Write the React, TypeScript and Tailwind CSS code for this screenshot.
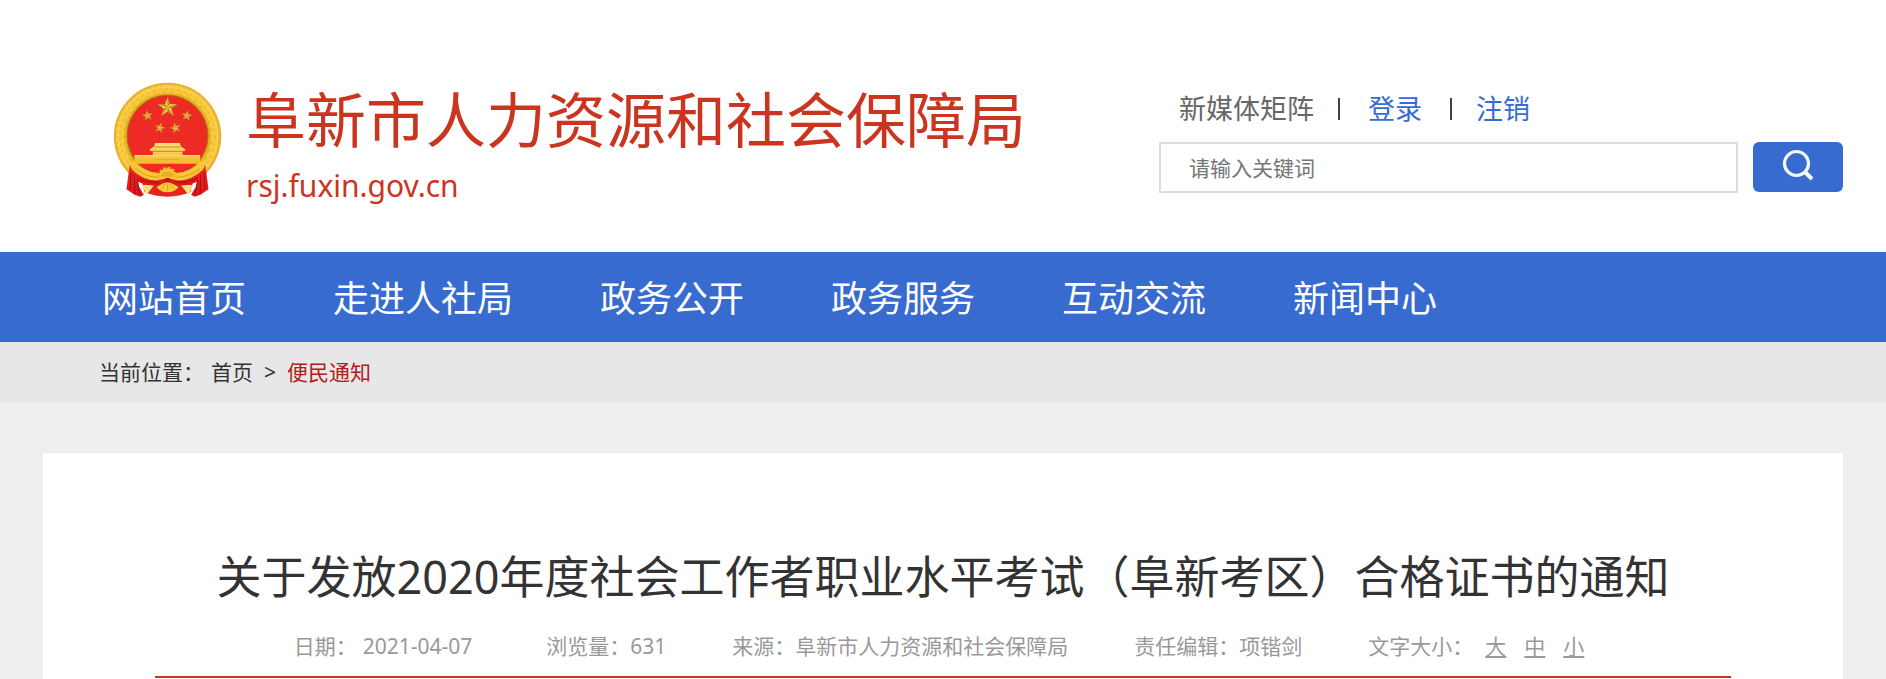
import type { ReactNode } from 'react';

const NAV_ITEMS = ['网站首页', '走进人社局', '政务公开', '政务服务', '互动交流', '新闻中心'];

const FONT_SIZES = ['大', '中', '小'];

// Small stars of the emblem: centre x, centre y, rotation
const SMALL_STARS = [
  [171, 137, -10],
  [289, 137, 10],
  [208, 174, 15],
  [255, 174, -15],
];

export default function App() {
  return (
    <div className="flex min-h-screen flex-col bg-[#eeeeee] font-['Noto_Sans','Noto_Sans_CJK_SC',sans-serif] text-[#333333]">
      <Header />
      <MainNav />
      <Breadcrumb />
      <Article />
    </div>
  );
}

function Header() {
  return (
    <header className="bg-white">
      <div className="mx-auto flex max-w-[1800px] items-start justify-between pt-20 pb-10 pl-[70px]">
        <a href="#" className="flex items-start text-[#cb341f]">
          <Emblem />
          <span className="ml-6 flex flex-col">
            <span className="text-[60px] leading-[80px] whitespace-nowrap">阜新市人力资源和社会保障局</span>
            <span className="text-[30px] leading-[52px]">rsj.fuxin.gov.cn</span>
          </span>
        </a>

        <div className="w-[684px] pt-2">
          <div className="flex h-10 items-center pt-0.5 pl-5 text-[27px] leading-10 text-[#666666]">
            <a href="#">新媒体矩阵</a>
            <Divider />
            <a href="#" className="px-1 text-[#376bd0]">登录</a>
            <Divider />
            <a href="#" className="text-[#376bd0]">注销</a>
          </div>
          <form className="mt-3.5 flex gap-[15px]" onSubmit={(e) => e.preventDefault()}>
            <input
              type="text"
              aria-label="关键词"
              placeholder="请输入关键词"
              className="h-[51px] min-w-0 flex-1 border-2 border-[#dddddd] bg-white px-7 text-[21px] outline-none placeholder:text-[#757575]"
            />
            <button
              type="submit"
              aria-label="搜索"
              className="flex h-[50px] w-[90px] items-center justify-center rounded-md bg-[#376bd0]"
            >
              <svg viewBox="0 0 32 32" className="mb-1 h-8 w-8" fill="none" stroke="#f4f8ff">
                <circle cx="14.5" cy="14.5" r="12" strokeWidth="3.2" />
                <path d="M23 23 L30 30" strokeWidth="4" />
              </svg>
            </button>
          </form>
        </div>
      </div>
    </header>
  );
}

function Divider() {
  return <span className="mx-6 h-[22px] w-0.5 bg-[#444444]" />;
}

function MainNav() {
  return (
    <nav className="bg-[#376bd0] pt-1">
      <ul className="mx-auto flex max-w-[1800px] gap-[87px] pl-[59px] text-4xl text-white">
        {NAV_ITEMS.map((item) => (
          <li key={item}>
            <a href="#" className="block leading-[86px] whitespace-nowrap">{item}</a>
          </li>
        ))}
      </ul>
    </nav>
  );
}

function Breadcrumb() {
  return (
    <div className="bg-[#e7e7e7]">
      <div className="mx-auto flex max-w-[1800px] pl-14 text-[21px] leading-[60px]">
        <span>当前位置：</span>
        <a href="#" className="ml-[7px]">首页</a>
        <span className="mx-[11px]">&gt;</span>
        <a href="#" className="text-[#b02020]">便民通知</a>
      </div>
    </div>
  );
}

function Article() {
  return (
    <main className="mx-auto mt-[51px] w-full max-w-[1800px] flex-1 bg-white px-28 pt-[90px]">
      <h1 className="text-center text-[45px] leading-[68px]">
        关于发放2020年度社会工作者职业水平考试（阜新考区）合格证书的通知
      </h1>
      <div className="mt-[18px] flex justify-center gap-[66px] border-b-2 border-[#cb341f] pt-px pr-2 pb-3.5 text-[21px] leading-8 text-[#999999]">
        <Meta label="日期：">
          <span className="mr-2 ml-1.5">2021-04-07</span>
        </Meta>
        <Meta label="浏览量：">631</Meta>
        <Meta label="来源：">阜新市人力资源和社会保障局</Meta>
        <Meta label="责任编辑：">项锴剑</Meta>
        <Meta label="文字大小：">
          <span className="ml-3 inline-flex gap-[18px]">
            {FONT_SIZES.map((size) => (
              <button key={size} type="button" className="underline underline-offset-2">{size}</button>
            ))}
          </span>
        </Meta>
      </div>
    </main>
  );
}

function Meta({ label, children }: { label: string; children: ReactNode }) {
  return (
    <span className="whitespace-nowrap">
      {label}
      {children}
    </span>
  );
}

/** National emblem: gold wreath, red field with stars and gate, drapery below. */
function Emblem() {
  return (
    <svg viewBox="68 36 326 348" className="mt-0.5 h-[116px] w-[109px] shrink-0" aria-hidden="true">
      <defs>
        <radialGradient id="wreath" cx="231" cy="198" r="162" gradientUnits="userSpaceOnUse">
          <stop offset="0.72" stopColor="#b07a14" />
          <stop offset="0.78" stopColor="#eeb522" />
          <stop offset="0.9" stopColor="#fbd24a" />
          <stop offset="1" stopColor="#e3a51c" />
        </radialGradient>
        <linearGradient id="gate" x1="0" y1="0" x2="0" y2="1">
          <stop offset="0" stopColor="#fde07a" />
          <stop offset="1" stopColor="#f2b92e" />
        </linearGradient>
        <linearGradient id="cloth" x1="0" y1="0" x2="0" y2="1">
          <stop offset="0" stopColor="#ee2a24" />
          <stop offset="1" stopColor="#d8161a" />
        </linearGradient>
        <clipPath id="wreath-clip">
          <rect x="60" y="30" width="342" height="290" />
        </clipPath>
      </defs>

      <g clipPath="url(#wreath-clip)">
        <circle cx="231" cy="199" r="161" fill="url(#wreath)" />
        {/* Ears of grain */}
        <g fill="none" stroke="#fff0a0" strokeWidth="3" opacity="0.5">
          <circle cx="231" cy="199" r="151" strokeDasharray="9 8" />
          <circle cx="231" cy="199" r="134" strokeDasharray="14 11" />
        </g>
        <g fill="none" stroke="#cf8e14" strokeWidth="3" opacity="0.5">
          <circle cx="231" cy="199" r="143" strokeDasharray="10 9" />
          <circle cx="231" cy="199" r="128" strokeDasharray="7 12" />
        </g>
      </g>
      <circle cx="231" cy="197" r="121" fill="#ee2a24" stroke="#a96e13" strokeWidth="3" />

      <g stroke="#a87518" strokeWidth="1">
        <Star cx={231} cy={112} r={31} rotate={0} />
        {SMALL_STARS.map(([cx, cy, rotate]) => (
          <Star key={cx} cx={cx} cy={cy} r={16} rotate={rotate} />
        ))}
      </g>

      {/* Gate tower */}
      <path d="M194 219 H268 L271 229 L284 238 V243 H276 V255 H329 V281 H132 V255 H187 V243 H178 V238 L191 229Z" fill="url(#gate)" />
      <path d="M192 231 H270 M184 244 H278" stroke="#c98b1a" strokeWidth="3" />
      <path d="M132 257 H329" stroke="#ffe896" strokeWidth="2" />
      <path d="M194 268 H268" stroke="#e2a01c" strokeWidth="2" />

      {/* Red ground under the wreath */}
      <path d="M150 318 H312 L300 366 Q268 380 231 380 Q194 380 162 366Z" fill="#e8231f" />
      {/* Wreath stems crossing towards the cogwheel */}
      <path d="M128 272 Q158 304 200 308 L231 312 L262 308 Q304 304 334 272 L346 300 Q310 332 264 332 H198 Q152 332 116 300Z" fill="#f8c735" />
      <path d="M134 296 Q166 322 206 322 M328 296 Q296 322 256 322" stroke="#dc9f1e" strokeWidth="3" fill="none" />

      {/* Cogwheel */}
      <circle cx="231" cy="320" r="25" fill="#f9ca3c" stroke="#f4bd2c" strokeWidth="9" strokeDasharray="8 5" />
      <path d="M210 320 Q214 304 231 304 Q248 304 252 320Z" fill="#e9ad22" />

      {/* Gold tails and centre fan */}
      <path d="M154 346 L194 342 L168 374Z M308 346 L268 342 L294 374Z" fill="#fbdf78" />
      <path d="M198 352 Q214 338 231 338 Q248 338 264 352 Q252 367 231 367 Q210 367 198 352Z" fill="#f9c938" />
      <path d="M212 358 L223 342 M231 364 V341 M250 358 L239 342" stroke="#d5971b" strokeWidth="2" />

      {/* Sashes meeting at the knot */}
      <path d="M126 300 Q156 330 198 332 L231 324 L264 332 Q306 330 336 300 L340 322 Q306 350 262 346 L231 336 L200 346 Q156 350 122 322Z" fill="url(#cloth)" />
      <ellipse cx="231" cy="330" rx="8" ry="7" fill="#c41318" />
      <path d="M134 320 Q166 340 204 337 M328 320 Q296 340 258 337" stroke="#a50f14" strokeWidth="3" fill="none" />

      {/* Side drapes */}
      <path d="M118 284 Q124 302 138 312 L146 350 L160 374 L150 380 L132 374 L108 358 L113 318Z" fill="url(#cloth)" />
      <path d="M344 284 Q338 302 324 312 L316 350 L302 374 L312 380 L330 374 L354 358 L349 318Z" fill="url(#cloth)" />
      <path d="M121 306 L119 358 M131 314 L133 370 M140 330 L148 374 M341 306 L343 358 M331 314 L329 370 M322 330 L314 374" stroke="#a50f14" strokeWidth="3" fill="none" />
    </svg>
  );
}

function Star({ cx, cy, r, rotate }: { cx: number; cy: number; r: number; rotate: number }) {
  const points = Array.from({ length: 10 }, (_, i) => {
    const radius = i % 2 === 0 ? r : r * 0.4;
    const angle = (i * Math.PI) / 5 - Math.PI / 2;
    return [radius * Math.cos(angle), radius * Math.sin(angle)];
  });
  return (
    <g transform={`translate(${cx} ${cy}) rotate(${rotate})`}>
      <polygon points={points.map((p) => p.join(',')).join(' ')} fill="#f6cd55" />
      {/* Shaded facets, one per ray */}
      {[0, 2, 4, 6, 8].map((i) => (
        <polygon
          key={i}
          points={`0,0 ${points[i].join(',')} ${points[(i + 1) % 10].join(',')}`}
          fill="#c18a25"
          stroke="none"
        />
      ))}
    </g>
  );
}
